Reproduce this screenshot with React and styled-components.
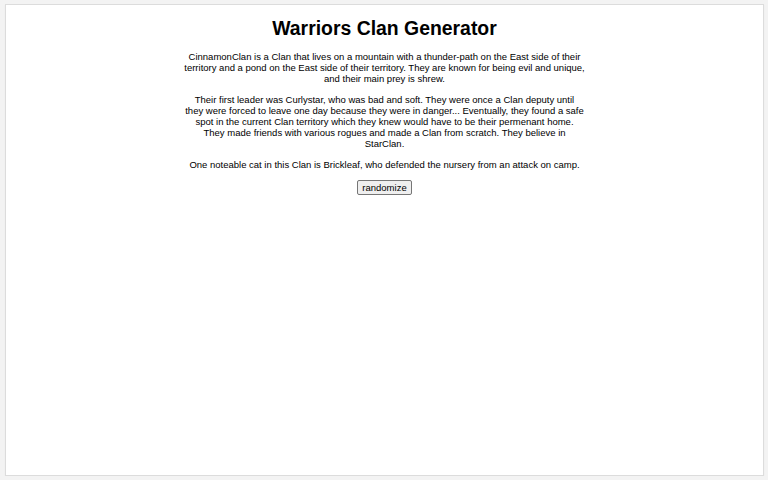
import React, { useState } from "react";
import styled, { createGlobalStyle } from "styled-components";

const Global = createGlobalStyle`
  html, body { margin: 0; padding: 0; background: #f3f3f3; }
  body { font-family: "Liberation Sans", Arial, sans-serif; color: #000; }
`;

const Frame = styled.div`
  box-sizing: border-box;
  margin: 4px 4px 0 5px;
  height: 472px;
  background: #fff;
  border: 1px solid #dcdcdc;
  box-shadow: 0 1px 1px rgba(0, 0, 0, 0.06);
  display: flex;
  flex-direction: column;
  align-items: center;
  padding-top: 11px;
`;

const Title = styled.h1`
  margin: 0 0 11px;
  font-size: 19.4px;
  font-weight: bold;
  line-height: 24px;
`;

const Body = styled.div`
  width: 404px;
  text-align: center;
  font-size: 9.5px;
  line-height: 11px;
`;

const Para = styled.p`
  margin: 0 0 10px;
`;

const Button = styled.button`
  font-family: "Liberation Sans", Arial, sans-serif;
  font-size: 9.5px;
  line-height: 12px;
  padding: 0 4px;
  height: 15px;
  background: #efefef;
  border: 1px solid #767676;
  border-radius: 2px;
  color: #000;
  cursor: pointer;
`;

export default function App() {
  const [n, setN] = useState(0);
  return (
    <>
      <Global />
      <Frame>
        <Title>Warriors Clan Generator</Title>
        <Body>
          <Para>
            CinnamonClan is a Clan that lives on a mountain with a thunder-path on the East side of their
            territory and a pond on the East side of their territory. They are known for being evil and unique,
            and their main prey is shrew.
          </Para>
          <Para>
            Their first leader was Curlystar, who was bad and soft. They were once a Clan deputy until
            <br />
            they were forced to leave one day because they were in danger... Eventually, they found a safe
            <br />
            spot in the current Clan territory which they knew would have to be their permenant home.
            <br />
            They made friends with various rogues and made a Clan from scratch. They believe in
            <br />
            StarClan.
          </Para>
          <Para>
            One noteable cat in this Clan is Brickleaf, who defended the nursery from an attack on camp.
          </Para>
          <Button onClick={() => setN(n + 1)}>randomize</Button>
        </Body>
      </Frame>
    </>
  );
}
